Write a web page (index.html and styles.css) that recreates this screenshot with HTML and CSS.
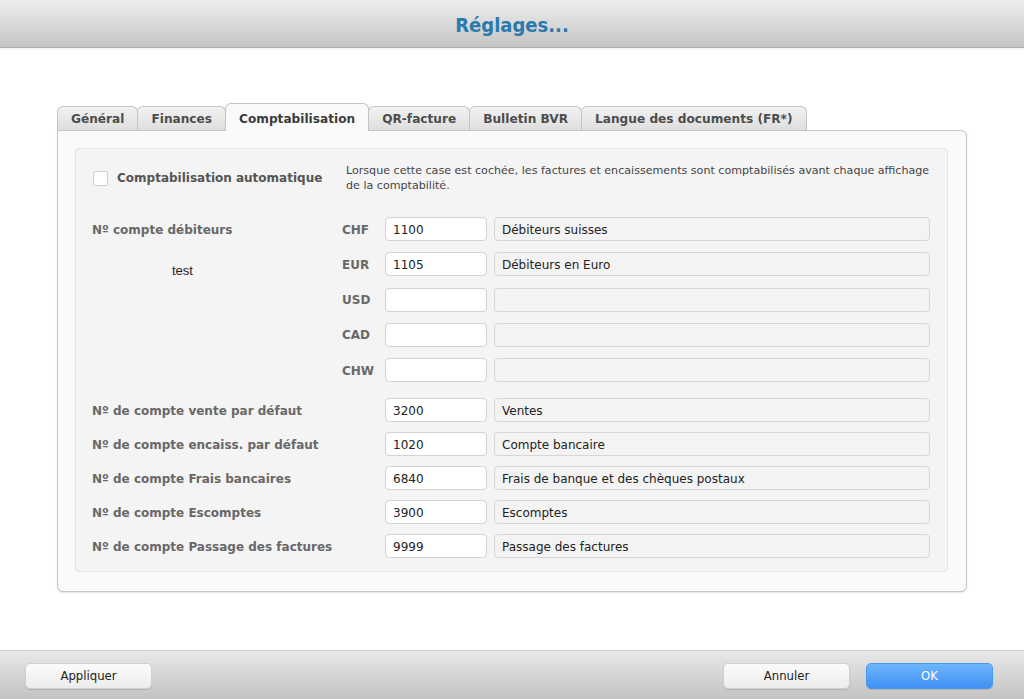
FILE: index.html
```html
<!DOCTYPE html>
<html lang="fr">
<head>
<meta charset="utf-8">
<title>Réglages...</title>
<link rel="stylesheet" href="styles.css">
</head>
<body>
<div class="window">
  <header class="titlebar"><h1 class="title">Réglages...</h1></header>
  <main class="content">
    <nav class="tabs">
      <div class="tab">Général</div>
      <div class="tab">Finances</div>
      <div class="tab active">Comptabilisation</div>
      <div class="tab">QR-facture</div>
      <div class="tab">Bulletin BVR</div>
      <div class="tab">Langue des documents (FR*)</div>
    </nav>
    <section class="panel">
      <div class="inner">
        <div class="auto-row">
          <label class="auto-label"><span class="checkbox"></span>Comptabilisation automatique</label>
          <p class="auto-desc">Lorsque cette case est cochée, les factures et encaissements sont comptabilisés avant chaque affichage<br>de la comptabilité.</p>
        </div>
        <div class="grid g1">
          <div class="lbl">Nº compte débiteurs</div><div class="cur">CHF</div><div class="field">1100</div><div class="field ro">Débiteurs suisses</div>
          <div class="lbl test">test</div><div class="cur">EUR</div><div class="field">1105</div><div class="field ro">Débiteurs en Euro</div>
          <div class="lbl"></div><div class="cur">USD</div><div class="field"></div><div class="field ro"></div>
          <div class="lbl"></div><div class="cur">CAD</div><div class="field"></div><div class="field ro"></div>
          <div class="lbl"></div><div class="cur">CHW</div><div class="field"></div><div class="field ro"></div>
        </div>
        <div class="grid g2">
          <div class="lbl">Nº de compte vente par défaut</div><div class="cur"></div><div class="field">3200</div><div class="field ro">Ventes</div>
          <div class="lbl">Nº de compte encaiss. par défaut</div><div class="cur"></div><div class="field">1020</div><div class="field ro">Compte bancaire</div>
          <div class="lbl">Nº de compte Frais bancaires</div><div class="cur"></div><div class="field">6840</div><div class="field ro">Frais de banque et des chèques postaux</div>
          <div class="lbl">Nº de compte Escomptes</div><div class="cur"></div><div class="field">3900</div><div class="field ro">Escomptes</div>
          <div class="lbl">Nº de compte Passage des factures</div><div class="cur"></div><div class="field">9999</div><div class="field ro">Passage des factures</div>
        </div>
      </div>
    </section>
  </main>
  <footer class="bottombar">
    <button class="btn">Appliquer</button>
    <div class="spacer"></div>
    <button class="btn">Annuler</button>
    <button class="btn primary">OK</button>
  </footer>
</div>
</body>
</html>
```

FILE: styles.css
```css
* { box-sizing: border-box; }
html, body { margin: 0; padding: 0; }
body {
  width: 1024px;
  height: 699px;
  overflow: hidden;
  background: #ffffff;
  font-family: "DejaVu Sans", Verdana, sans-serif;
}
.window {
  display: flex;
  flex-direction: column;
  height: 699px;
}
.titlebar {
  height: 48px;
  background: linear-gradient(#eeeeee, #c5c5c5);
  border-bottom: 1px solid #acacac;
  display: flex;
  align-items: center;
  justify-content: center;
  box-shadow: 0 1px 2px rgba(0,0,0,0.08);
}
.title {
  margin: 0;
  font-family: "DejaVu Sans Condensed", "DejaVu Sans", sans-serif;
  font-stretch: condensed;
  font-weight: bold;
  font-size: 20px;
  color: #2a7aad;
  padding-top: 2px;
}
.content {
  flex: 1;
  padding: 55px 57px 0 57px;
}
.tabs {
  display: flex;
  align-items: flex-end;
  height: 27px;
  position: relative;
  z-index: 1;
}
.tab {
  height: 24px;
  padding: 0 13px;
  border: 1px solid #c4c4c4;
  border-bottom: none;
  border-radius: 6px 6px 0 0;
  background: linear-gradient(#f2f2f2, #dedede);
  font-weight: bold;
  font-size: 12.15px;
  color: #4d4d4d;
  display: flex;
  align-items: center;
  margin-right: -1px;
  white-space: nowrap;
}
.tab.active {
  height: 28px;
  margin-bottom: -1px;
  background: #fafafa;
  color: #3c3c3c;
  padding-top: 2px;
  position: relative;
  z-index: 2;
}
.panel {
  border: 1px solid #c6c6c6;
  border-radius: 0 6px 6px 6px;
  background: #fafafa;
  padding: 17px 18px 19px 17px;
  box-shadow: 0 1px 2px rgba(0,0,0,0.12);
  height: 462px;
}
.inner {
  border: 1px solid #e4e4e4;
  border-radius: 4px;
  background: #f4f4f4;
  padding: 14px 17px 13px 16px;
  height: 424px;
}
.auto-row {
  display: flex;
  align-items: center;
  height: 30px;
}
.auto-label {
  width: 254px;
  display: flex;
  align-items: center;
  font-weight: bold;
  font-size: 12px;
  color: #555555;
  white-space: nowrap;
}
.checkbox {
  width: 15px;
  height: 15px;
  border: 1px solid #cfcfcf;
  background: #ffffff;
  border-radius: 2px;
  margin-left: 1px;
  margin-right: 9px;
}
.auto-desc {
  margin: 0;
  font-size: 11.1px;
  line-height: 15px;
  color: #444444;
  white-space: nowrap;
}
.grid {
  display: grid;
  grid-template-columns: 243px 36px 102px 1fr;
  column-gap: 7px;
  grid-auto-rows: 24px;
}
.g1 { margin-top: 24px; row-gap: 11.25px; }
.g2 { margin-top: 16px; row-gap: 10px; }
.lbl {
  font-weight: bold;
  font-size: 12px;
  color: #686868;
  display: flex;
  align-items: center;
  white-space: nowrap;
  padding-top: 1px;
}
.lbl.test {
  font-family: "Liberation Sans", Arial, sans-serif;
  font-weight: normal;
  font-size: 13px;
  color: #222222;
  padding-left: 80px;
  padding-top: 12px;
}
.cur {
  font-weight: bold;
  font-size: 12px;
  color: #686868;
  display: flex;
  align-items: center;
  padding-top: 1px;
}
.field {
  border: 1px solid #d2d2d2;
  border-radius: 4px;
  background: #ffffff;
  font-size: 12px;
  color: #222222;
  padding-left: 7px;
  padding-top: 1px;
  display: flex;
  align-items: center;
  white-space: nowrap;
}
.field.ro {
  background: #f3f3f3;
  border-color: #d6d6d6;
}
.bottombar {
  height: 49px;
  background: linear-gradient(#e8e8e8, #c3c3c3);
  border-top: 1px solid #cfcfcf;
  display: flex;
  align-items: center;
  padding: 0 31px 0 25px;
  gap: 16px;
}
.spacer { flex: 1; }
.btn {
  width: 127px;
  height: 26px;
  border: 1px solid #d0d0d0;
  border-radius: 5px;
  background: linear-gradient(#fbfbfb, #ececec);
  box-shadow: 0 1px 1px rgba(0,0,0,0.12);
  font-family: "DejaVu Sans Condensed", "DejaVu Sans", sans-serif;
  font-stretch: condensed;
  font-size: 13px;
  color: #222222;
  padding: 0;
  margin-top: 1px;
}
.btn.primary {
  background: linear-gradient(#6db5fc, #3f90f3);
  border-color: #4a98f0;
  color: #ffffff;
}
```
